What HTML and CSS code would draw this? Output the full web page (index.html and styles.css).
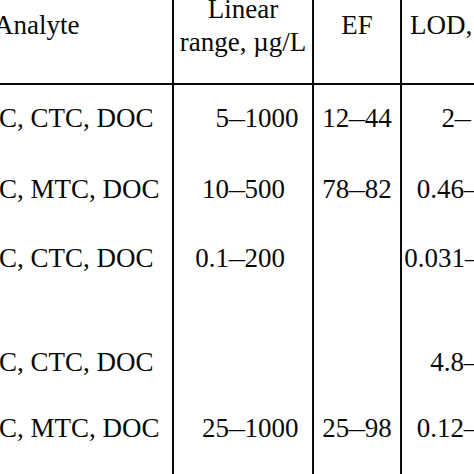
FILE: index.html
```html
<!DOCTYPE html>
<html lang="en">
<head>
<meta charset="utf-8">
<title>Table</title>
<link rel="stylesheet" href="styles.css">
</head>
<body>
<div class="page">
  <div class="table">
    <div class="cell head head-name">Analyte</div>
    <div class="cell head head-center">Linear<br>range, µg/L</div>
    <div class="cell head head-center">EF</div>
    <div class="cell head head-lod last">LOD,</div>

    <div class="cell name">C, CTC, DOC</div>
    <div class="cell range"><span class="lo lo-lin">5</span><span class="dash">–</span><span>1000</span></div>
    <div class="cell ef">12<span class="dash">–</span>44</div>
    <div class="cell range last"><span class="lo lo-lod-short">2</span><span class="dash">–</span></div>

    <div class="cell name">C, MTC, DOC</div>
    <div class="cell range"><span class="lo lo-lin">10</span><span class="dash">–</span><span>500</span></div>
    <div class="cell ef">78<span class="dash">–</span>82</div>
    <div class="cell range last"><span class="lo lo-lod">0.46</span><span class="dash">–</span></div>

    <div class="cell name">C, CTC, DOC</div>
    <div class="cell range"><span class="lo lo-lin">0.1</span><span class="dash">–</span><span>200</span></div>
    <div class="cell ef"></div>
    <div class="cell range last"><span class="lo lo-lod-long">0.031</span><span class="dash">–</span></div>

    <div class="cell name">C, CTC, DOC</div>
    <div class="cell range"></div>
    <div class="cell ef"></div>
    <div class="cell range last"><span class="lo lo-lod">4.8</span><span class="dash">–</span></div>

    <div class="cell name">C, MTC, DOC</div>
    <div class="cell range"><span class="lo lo-lin">25</span><span class="dash">–</span><span>1000</span></div>
    <div class="cell ef">25<span class="dash">–</span>98</div>
    <div class="cell range last"><span class="lo lo-lod">0.12</span><span class="dash">–</span></div>
  </div>
</div>
</body>
</html>
```
FILE: styles.css
```css
html, body {
  margin: 0;
  padding: 0;
  background: #fff;
  overflow: hidden;
}

body {
  font-family: "Liberation Serif", "Times New Roman", serif;
  font-size: 27px;
  line-height: 33px;
  color: #0a0a0a;
}

.page {
  width: 474px;
  height: 474px;
  overflow: hidden;
}

.table {
  display: grid;
  grid-template-columns: 180px 140px 88px 140px;
  grid-template-rows: 117px 71px 69px 104px 66px 120px;
  margin: -32px 0 0 -6px;
}

.cell {
  box-sizing: border-box;
  padding-top: 17px;
  white-space: nowrap;
  border-right: 2px solid #0a0a0a;
}

.cell.last {
  border-right: none;
}

.head {
  padding: 0;
  border-bottom: 2px solid #0a0a0a;
  display: flex;
  align-items: center;
}

.head-name {
  padding-left: 0;
}

.head-center {
  justify-content: center;
  text-align: center;
}

.head-lod {
  padding-left: 8px;
}

.name {
  padding-left: 5px;
}

.range {
  display: flex;
  align-items: flex-start;
}

.lo {
  flex: none;
  text-align: right;
}

.lo-lin {
  width: 55px;
}

.lo-lod {
  width: 62px;
}

.lo-lod-long {
  width: 63px;
}

.lo-lod-short {
  width: 53px;
}

.dash {
  display: inline-block;
  transform: scaleX(1.2);
  margin: 0 1px;
}

.ef {
  text-align: center;
}
```
